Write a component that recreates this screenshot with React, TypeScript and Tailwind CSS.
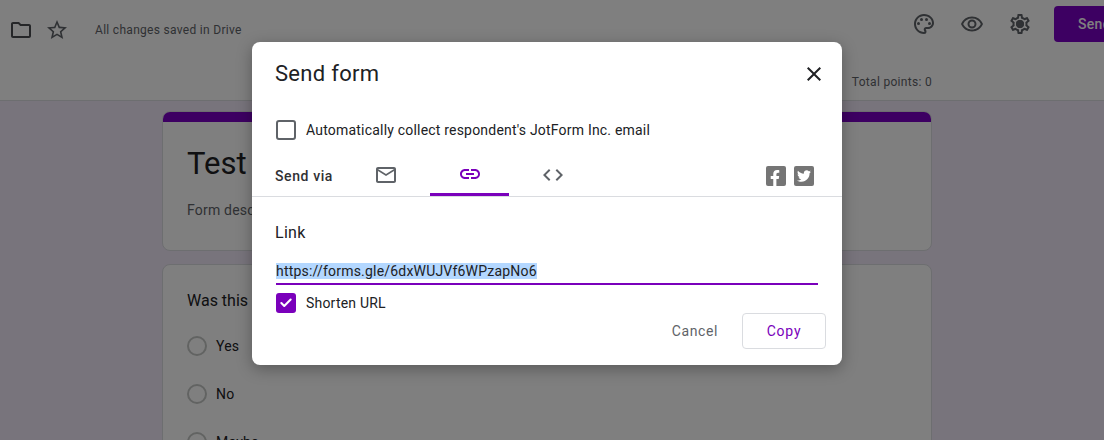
import { MdOutlineFolder, MdStarBorder, MdOutlinePalette, MdOutlineRemoveRedEye, MdOutlineSettings, MdClose, MdMailOutline, MdLink, MdCode } from 'react-icons/md';
import { FaFacebookF, FaTwitter } from 'react-icons/fa';
import { Check } from 'lucide-react';

function Option({ label }: { label: string }) {
  return (
    <div className="flex h-[48px] items-center gap-[9px]">
      <div className="h-5 w-5 rounded-full border-2 border-[#c4c7c5]" />
      <span className="text-sm tracking-[0.2px] text-[#202124]">{label}</span>
    </div>
  );
}

function Page() {
  return (
    <>
      <header className="h-[101px] border-b border-[#dadce0] bg-white">
        <div className="flex h-[60px] pl-[11px]">
          <div className="flex items-center self-center">
            <MdOutlineFolder size={24} className="-ml-[2px] text-[#4a4d50]" />
            <MdStarBorder size={24} className="ml-[12px] text-[#5f6368]" />
            <span className="ml-[26px] text-xs tracking-[0.3px] text-[#5f6368]">All changes saved in Drive</span>
          </div>
          <div className="ml-auto mt-[6px] flex h-[36px] items-center gap-6 self-start">
            <MdOutlinePalette size={24} className="text-[#5f6368]" />
            <MdOutlineRemoveRedEye size={24} className="text-[#5f6368]" />
            <div className="relative h-6 w-6">
              <MdOutlineSettings size={24} className="text-[#5f6368]" />
              <div className="absolute left-[8px] top-[8px] h-2 w-2 rounded-full bg-[#5f6368]" />
            </div>
            <button className="-ml-[2px] -mr-[46px] h-[36px] w-[96px] shrink-0 rounded bg-[#7a00c4] pl-[24px] text-left text-sm font-medium tracking-[0.3px] text-white">
              Send
            </button>
          </div>
        </div>
        <div className="pr-[172px] pt-[14px] text-right text-xs tracking-[0.3px] text-[#5f6368]">Total points: 0</div>
      </header>
      <main className="flex flex-col gap-[13px] pl-[162px] pr-[172px] pt-[10px]">
        <section className="h-[140px] overflow-hidden rounded-lg border border-[#dadce0] bg-white">
          <div className="h-[10px] bg-[#7a00c4]" />
          <div className="px-6 pt-[22px]">
            <h1 className="text-[31px] leading-[40px] text-[#202124]">Test form</h1>
            <p className="mt-[16px] text-sm tracking-[0.2px] text-[#5f6368]">Form description</p>
          </div>
        </section>
        <section className="rounded-lg border border-[#dadce0] bg-white px-6 pt-[24px]">
          <h2 className="mb-[9px] text-base leading-[24px] text-[#202124]">Was this helpful?</h2>
          <Option label="Yes" />
          <Option label="No" />
          <Option label="Maybe" />
        </section>
      </main>
    </>
  );
}

function Dialog() {
  return (
    <div className="absolute left-[252px] top-[42px] h-[323px] w-[590px] rounded-lg bg-white shadow-[0_4px_16px_rgba(0,0,0,0.3)]">
      <div className="flex items-center justify-between pl-[23px] pr-[16px] pt-[17px]">
        <h2 className="text-[22px] leading-[30px] tracking-[0.3px] text-[#202124]">Send form</h2>
        <MdClose size={24} className="text-[#202124]" />
      </div>
      <label className="mt-[31px] flex items-center gap-[10px] pl-[24px]">
        <span className="h-5 w-5 rounded-[3px] border-2 border-[#5f6368]" />
        <span className="text-sm tracking-[0.2px] text-[#202124]">Automatically collect respondent's JotForm Inc. email</span>
      </label>
      <div className="mt-[11px] flex h-[46px] items-center border-b border-[#dadce0] pl-[23px] pr-[28px]">
        <span className="w-[80px] pt-[4px] text-sm font-medium tracking-[0.6px] text-[#303134]">Send via</span>
        <div className="flex h-full w-[62px] items-center justify-center pt-[2px]">
          <MdMailOutline size={24} className="text-[#5f6368]" />
        </div>
        <div className="ml-[13px] flex h-full w-[79px] items-center justify-center border-b-[3px] border-[#7a00bb] pt-[4px]">
          <MdLink size={24} className="text-[#7a00bb]" />
        </div>
        <div className="flex h-full w-[88px] items-center justify-center pt-[2px]">
          <MdCode size={24} className="text-[#5f6368]" />
        </div>
        <div className="ml-auto flex items-center gap-2 pt-[4px]">
          <div className="flex h-5 w-5 items-end justify-end overflow-hidden rounded-[2px] bg-[#757575] pr-[3px]">
            <FaFacebookF size={16} className="text-white" />
          </div>
          <div className="flex h-5 w-5 items-center justify-center rounded-[2px] bg-[#757575]">
            <FaTwitter size={14} className="text-white" />
          </div>
        </div>
      </div>
      <div className="pl-[24px] pr-[24px] pt-[25px]">
        <h3 className="-ml-[1px] text-base leading-[22px] tracking-[0.3px] text-[#202124]">Link</h3>
        <div className="mt-[18px] border-b-2 border-[#7a00bb] pb-[3px] text-sm leading-[18px] tracking-[0.2px] text-[#202124]">
          <span className="bg-[#b3d7ff]">https://forms.gle/6dxWUJVf6WPzapNo6</span>
        </div>
        <label className="mt-[8px] flex items-center gap-[10px]">
          <span className="flex h-5 w-5 items-center justify-center rounded-[3px] bg-[#7a00bb]">
            <Check size={14} strokeWidth={3.5} className="text-white" />
          </span>
          <span className="text-sm tracking-[0.2px] text-[#202124]">Shorten URL</span>
        </label>
      </div>
      <div className="absolute bottom-[16px] right-[16px] flex items-center gap-[24px]">
        <button className="text-sm tracking-[0.6px] text-[#5f6368]">Cancel</button>
        <button className="h-[36px] w-[84px] rounded border border-[#dadce0] text-sm tracking-[0.8px] text-[#7a00bb]">Copy</button>
      </div>
    </div>
  );
}

export default function App() {
  return (
    <div className="relative h-[440px] w-[1104px] overflow-hidden bg-[#f0e8f8] font-['Roboto',sans-serif]">
      <Page />
      <div className="absolute inset-0 bg-black/50" />
      <Dialog />
    </div>
  );
}
